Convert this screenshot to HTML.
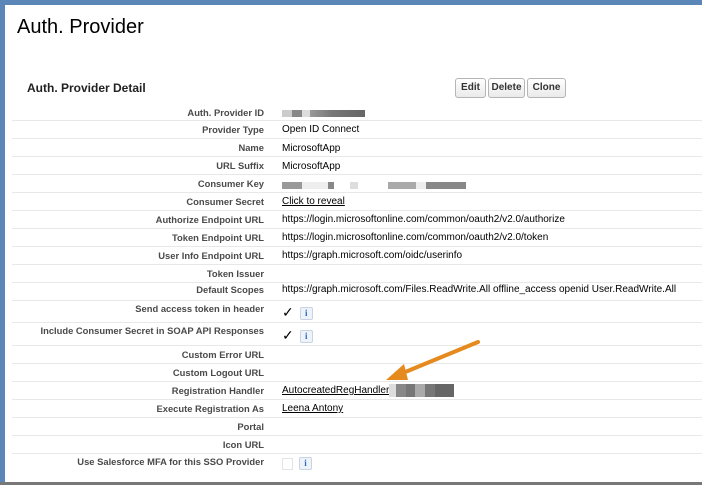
<!DOCTYPE html>
<html><head><style>
body{margin:0;width:702px;height:485px;overflow:hidden;background:#5a86b8;font-family:"Liberation Sans",Arial,sans-serif;position:relative}
#p{position:absolute;left:5px;top:5px;width:697px;height:477px;background:#fff}
#b{position:absolute;left:0;top:482px;width:702px;height:3px;background:#777}
h1{position:absolute;left:17px;top:16px;margin:0;font-weight:normal;font-size:20px;color:#000}
.h2{position:absolute;left:27px;top:81px;font-weight:bold;font-size:12px;color:#222}
.btn{position:absolute;top:78px;height:18px;border:1px solid #b5b5b5;border-radius:3px;background:linear-gradient(#fff,#eaeaea);font-size:10px;font-weight:bold;line-height:18px;text-align:center;color:#333}
.r{position:absolute;left:12px;width:690px;border-bottom:1px solid #e8e8e8;font-size:10px}
.l{position:absolute;right:438px;font-weight:bold;color:#4a4a4a;white-space:nowrap;font-size:9.4px}
.v{position:absolute;left:270px;color:#000;white-space:nowrap}
.u{text-decoration:underline}
.i{display:inline-block;width:11px;height:11px;border:1px solid #c8d4e4;border-radius:2px;background:#eef3fa;color:#2b6cc4;font-size:9px;font-weight:bold;text-align:center;line-height:11px;font-family:"Liberation Serif",serif;vertical-align:middle;margin-left:6px}
.px{display:inline-block;height:7px;vertical-align:middle}
</style></head><body>
<div id="p"></div><div id="b"></div>
<h1>Auth. Provider</h1>
<div class="h2">Auth. Provider Detail</div>
<div class="btn" style="left:455px;width:29px">Edit</div>
<div class="btn" style="left:488px;width:35px">Delete</div>
<div class="btn" style="left:527px;width:37px">Clone</div>

<div class="r" style="top:104px;height:16px"><span class="l" style="top:3px">Auth. Provider ID</span><span class="v" style="top:4px"><span class="px" style="width:10px;background:#ccc"></span><span class="px" style="width:10px;background:#888"></span><span class="px" style="width:8px;background:#ddd"></span><span class="px" style="width:55px;background:linear-gradient(90deg,#999,#777 40%,#666)"></span></span></div>
<div class="r" style="top:121px;height:17px"><span class="l" style="top:3px">Provider Type</span><span class="v" style="top:3px">Open ID Connect</span></div>
<div class="r" style="top:139px;height:17px"><span class="l" style="top:3px">Name</span><span class="v" style="top:4px">MicrosoftApp</span></div>
<div class="r" style="top:157px;height:17px"><span class="l" style="top:3px">URL Suffix</span><span class="v" style="top:4px">MicrosoftApp</span></div>
<div class="r" style="top:175px;height:17px"><span class="l" style="top:3px">Consumer Key</span><span class="v" style="top:5px"><span class="px" style="width:20px;background:#999"></span><span class="px" style="width:26px;background:#eee"></span><span class="px" style="width:6px;background:#888"></span><span class="px" style="width:16px;background:#fff"></span><span class="px" style="width:8px;background:#ddd"></span><span class="px" style="width:30px;background:#fff"></span><span class="px" style="width:28px;background:#aaa"></span><span class="px" style="width:10px;background:#eee"></span><span class="px" style="width:40px;background:#888"></span></span></div>
<div class="r" style="top:193px;height:17px"><span class="l" style="top:3px">Consumer Secret</span><span class="v u" style="top:3px">Click to reveal</span></div>
<div class="r" style="top:211px;height:17px"><span class="l" style="top:3px">Authorize Endpoint URL</span><span class="v" style="top:3px">https://login.microsoftonline.com/common/oauth2/v2.0/authorize</span></div>
<div class="r" style="top:229px;height:17px"><span class="l" style="top:3px">Token Endpoint URL</span><span class="v" style="top:3px">https://login.microsoftonline.com/common/oauth2/v2.0/token</span></div>
<div class="r" style="top:247px;height:17px"><span class="l" style="top:3px">User Info Endpoint URL</span><span class="v" style="top:3px">https://graph.microsoft.com/oidc/userinfo</span></div>
<div class="r" style="top:265px;height:17px"><span class="l" style="top:3px">Token Issuer</span></div>
<div class="r" style="top:283px;height:17px"><span class="l" style="top:1px">Default Scopes</span><span class="v" style="top:1px">https://graph.microsoft.com/Files.ReadWrite.All offline_access openid User.ReadWrite.All</span></div>
<div class="r" style="top:301px;height:21px"><span class="l" style="top:2px">Send access token in header</span><span class="v" style="top:3px;font-size:14px">✓<span class="i">i</span></span></div>
<div class="r" style="top:323px;height:22px"><span class="l" style="top:2px">Include Consumer Secret in SOAP API Responses</span><span class="v" style="top:4px;font-size:14px">✓<span class="i">i</span></span></div>
<div class="r" style="top:346px;height:17px"><span class="l" style="top:3px">Custom Error URL</span></div>
<div class="r" style="top:364px;height:17px"><span class="l" style="top:3px">Custom Logout URL</span></div>
<div class="r" style="top:382px;height:17px"><span class="l" style="top:3px">Registration Handler</span><span class="v" style="top:2px"><span class="u">AutocreatedRegHandler</span><span class="px" style="width:7px;background:#ddd;height:13px"></span><span class="px" style="width:58px;height:13px;background:linear-gradient(90deg,#888 0 17%,#777 17% 33%,#aaa 33% 50%,#777 50% 67%,#666 67%)"></span></span></div>
<div class="r" style="top:400px;height:17px"><span class="l" style="top:3px">Execute Registration As</span><span class="v u" style="top:3px">Leena Antony</span></div>
<div class="r" style="top:418px;height:17px"><span class="l" style="top:3px">Portal</span></div>
<div class="r" style="top:436px;height:17px"><span class="l" style="top:3px">Icon URL</span></div>
<div style="position:absolute;left:12px;top:454px;width:690px;font-size:10px"><span class="l" style="top:2px">Use Salesforce MFA for this SSO Provider</span><span class="v" style="top:3px"><span style="display:inline-block;width:9px;height:10px;border:1px solid #e4e4e4;vertical-align:middle"></span><span class="i">i</span></span></div>

<svg style="position:absolute;left:0;top:0" width="702" height="485"><line x1="478" y1="342" x2="398" y2="375" stroke="#e58a1e" stroke-width="4" stroke-linecap="round"/><polygon points="386,380 404,364 408,380" fill="#e58a1e"/></svg>
</body></html>
